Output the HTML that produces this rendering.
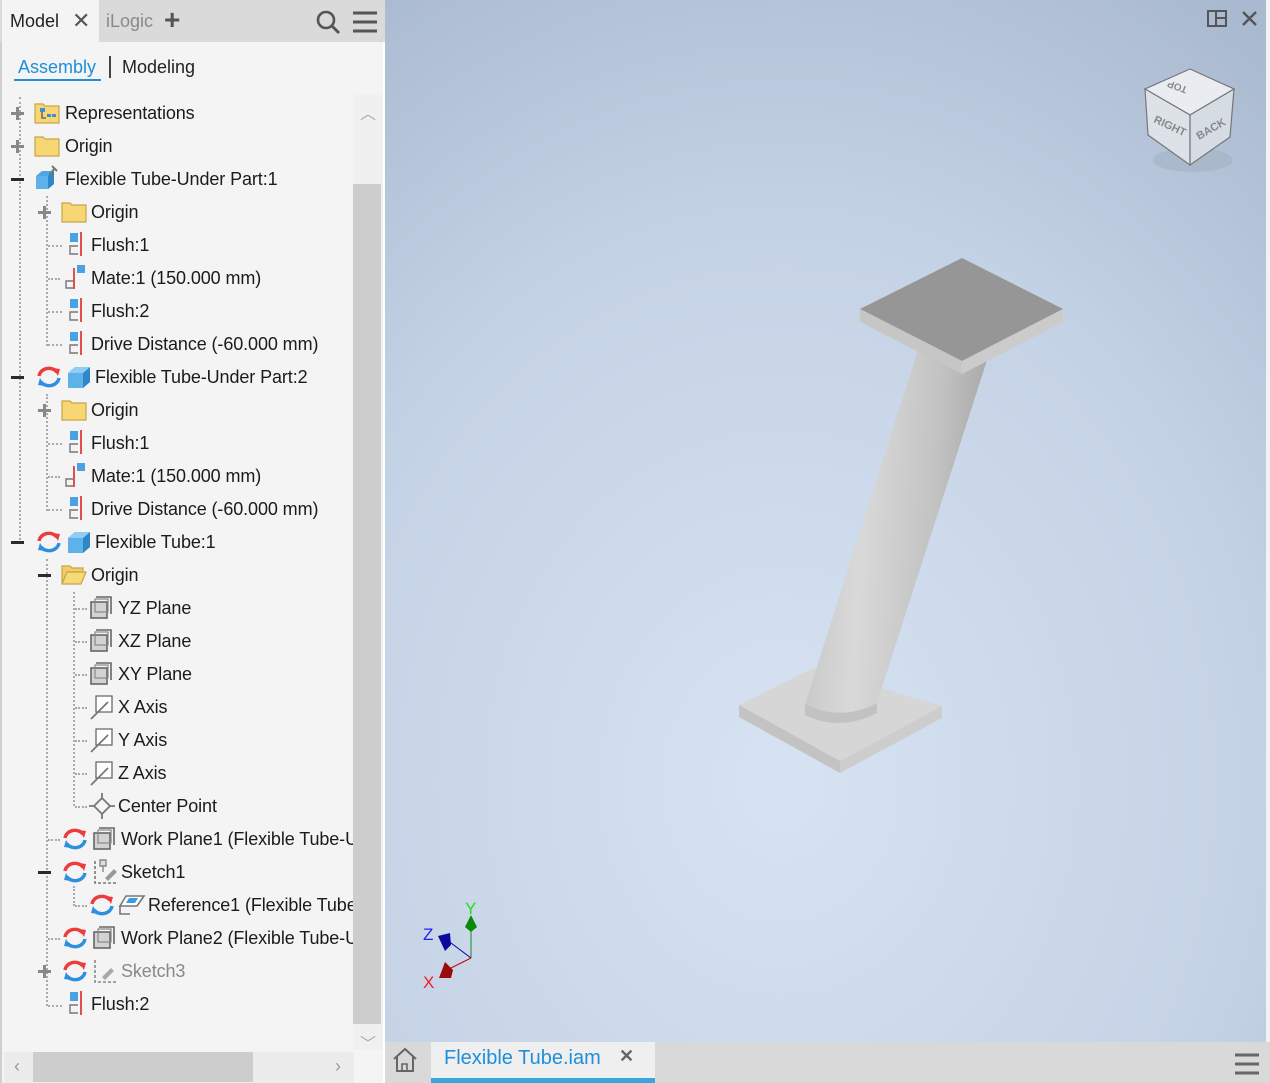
<!DOCTYPE html>
<html><head><meta charset="utf-8"><style>
*{margin:0;padding:0;box-sizing:border-box}
body{width:1270px;height:1083px;overflow:hidden;background:#fff;font-family:"Liberation Sans",sans-serif;position:relative}
.abs{position:absolute}
#left{position:absolute;left:0;top:0;width:383px;height:1083px;background:#f4f4f4;border-left:2px solid #d0d0d0}
.row{position:absolute;height:26px;line-height:26px;font-size:18px;color:#1b1b1b;white-space:nowrap;letter-spacing:-0.1px}
.ic{position:absolute;width:26px;height:26px}
.mn{position:absolute;width:13px;height:3px;background:#2a2a2a;margin-left:-2px;margin-top:12px}
.pl{position:absolute;width:13px;height:13px;margin-left:-2px;margin-top:7px}
.pl:before{content:"";position:absolute;left:0;top:5px;width:13px;height:3px;background:#888}
.pl:after{content:"";position:absolute;left:5px;top:0;width:3px;height:13px;background:#888}
.vd{position:absolute;border-left:2px dotted #aaa;width:0}
.hd{position:absolute;border-top:2px dotted #aaa;height:0}
</style></head><body>
<svg width="0" height="0" style="position:absolute">
<defs>
<symbol id="folder" viewBox="0 0 26 26"><path d="M1 5h8l2 2h14v17H1z" fill="#f7d774" stroke="#c7a546" stroke-width="1.2"/></symbol>
<symbol id="ofolder" viewBox="0 0 26 26"><path d="M1 5h8l2 2h11v4H6L1 23z" fill="#f3cd62" stroke="#c7a546" stroke-width="1.2"/><path d="M6 11h19l-5 12H1z" fill="#f7d978" stroke="#c7a546" stroke-width="1.2"/></symbol>
<symbol id="repr" viewBox="0 0 26 26"><path d="M1 5h8l2 2h14v17H1z" fill="#f7d774" stroke="#c7a546" stroke-width="1.2"/><rect x="6" y="9" width="5" height="4" fill="#3d8fd6"/><path d="M8 13v6h4" stroke="#555" fill="none" stroke-width="1.3"/><rect x="13" y="15" width="4" height="3" fill="#3d8fd6"/><rect x="18" y="15" width="4" height="3" fill="#3d8fd6"/></symbol>
<symbol id="flush" viewBox="0 0 26 26"><rect x="7" y="2" width="8" height="9" fill="#4aa3e0"/><path d="M15 15H7v8h8" stroke="#777" fill="none" stroke-width="1.4"/><path d="M18 1v24" stroke="#e05050" stroke-width="2"/></symbol>
<symbol id="mate" viewBox="0 0 26 26"><rect x="16" y="1" width="8" height="8" fill="#4aa3e0"/><path d="M13 17H5v7h8" stroke="#777" fill="none" stroke-width="1.4"/><path d="M13 4v21" stroke="#e05050" stroke-width="2"/></symbol>
<symbol id="sync" viewBox="0 0 28 26"><path d="M4 12a10 9 0 0 1 18-4" stroke="#ee3b3b" stroke-width="3.4" fill="none"/><path d="M18 4l7 1-2 7z" fill="#ee3b3b"/><path d="M24 14a10 9 0 0 1-18 4" stroke="#2d8fe0" stroke-width="3.4" fill="none"/><path d="M10 22l-7-1 2-7z" fill="#2d8fe0"/></symbol>
<symbol id="cube" viewBox="0 0 26 26"><path d="M2 9l7-6h15v15l-7 6H2z" fill="#4ea6e3"/><path d="M2 9h15v15H2z" fill="#5db2ea"/><path d="M17 9l7-6v15l-7 6z" fill="#2f86c8"/><path d="M2 9l7-6h15l-7 6z" fill="#8fcdf3"/></symbol>
<symbol id="pcube" viewBox="0 0 26 26"><path d="M2 11l6-5h12v13l-6 5H2z" fill="#4ea6e3"/><path d="M2 11h12v13H2z" fill="#5db2ea"/><path d="M14 11l6-5v13l-6 5z" fill="#2f86c8"/><path d="M15 10l6-7m-3-2l5 5" stroke="#777" stroke-width="2"/></symbol>
<symbol id="plane" viewBox="0 0 28 28"><path d="M8 3h15v17" stroke="#666" fill="none" stroke-width="1.6"/><rect x="3" y="8" width="16" height="16" fill="#d2d2d2" stroke="#666" stroke-width="1.6"/><rect x="7" y="5" width="13" height="13" fill="none" stroke="#888" stroke-width="1.2"/></symbol>
<symbol id="axis" viewBox="0 0 28 28"><path d="M8 3h16v16H8z" fill="#fff" stroke="#666" stroke-width="1.3"/><path d="M3 26L20 9" stroke="#777" stroke-width="1.8"/></symbol>
<symbol id="pt" viewBox="0 0 28 28"><path d="M14 6l8 8-8 8-8-8z" fill="none" stroke="#777" stroke-width="1.8"/><path d="M14 1v6M14 21v6M1 14h6M21 14h6" stroke="#777" stroke-width="1.8"/></symbol>
<symbol id="sketch" viewBox="0 0 28 28"><path d="M4 3v22h21" stroke="#777" fill="none" stroke-width="1.6" stroke-dasharray="3 2"/><path d="M9 2h6v6h-6zM12 8v6" stroke="#888" fill="#ddd" stroke-width="1.4"/><path d="M14 20l9-9 3 3-9 9z" fill="#999"/></symbol>
<symbol id="sketch3" viewBox="0 0 28 28"><path d="M4 3v22h21" stroke="#888" fill="none" stroke-width="1.6" stroke-dasharray="3 2"/><path d="M11 20l9-9 3 3-9 9z" fill="#aaa"/></symbol>
<symbol id="ref" viewBox="0 0 28 28"><path d="M8 5h18l-7 10H2z" fill="#fff" stroke="#777" stroke-width="1.6"/><path d="M11 7h9l-3 5H8z" fill="#3d9ae0"/><path d="M2 15v8h10" stroke="#777" fill="none" stroke-width="1.6"/></symbol>
<linearGradient id="tube" x1="0" y1="0" x2="1" y2="0.1"><stop offset="0" stop-color="#c4c4c4"/><stop offset="0.35" stop-color="#d9d9d9"/><stop offset="0.75" stop-color="#c2c2c2"/><stop offset="1" stop-color="#a9a9a9"/></linearGradient>
<radialGradient id="bg" cx="0.45" cy="0.75" r="0.9"><stop offset="0" stop-color="#d7e3f2"/><stop offset="0.6" stop-color="#c4d2e5"/><stop offset="1" stop-color="#a9b9cf"/></radialGradient>
</defs></svg>

<div id="left">
 <div class="abs" style="left:-2px;top:0;width:385px;height:42px;background:#dadada"></div>
 <div class="abs" style="left:0;top:0;width:97px;height:42px;background:#f4f4f4"></div>
 <div class="abs" style="left:8px;top:11px;font-size:18px;color:#222">Model</div>
 <div class="abs" style="left:70px;top:8px;font-size:22px;color:#555">✕</div>
 <div class="abs" style="left:104px;top:11px;font-size:18px;color:#8a8a8a">iLogic</div>
 <div class="abs" style="left:162px;top:4px;font-size:28px;color:#555;font-weight:bold">+</div>
 <svg class="abs" style="left:312px;top:8px" width="28" height="28"><circle cx="12" cy="12" r="8" stroke="#555" stroke-width="2.6" fill="none"/><path d="M18 18l7 7" stroke="#555" stroke-width="3"/></svg>
 <svg class="abs" style="left:350px;top:10px" width="26" height="24"><path d="M1 3h24M1 12h24M1 21h24" stroke="#555" stroke-width="3"/></svg>
 <div class="abs" style="left:16px;top:57px;font-size:18px;color:#1e8fd8">Assembly</div>
 <div class="abs" style="left:12px;top:79px;width:87px;height:2px;background:#1e8fd8"></div>
 <div class="abs" style="left:107px;top:56px;width:2px;height:22px;background:#444"></div>
 <div class="abs" style="left:120px;top:57px;font-size:18px;color:#222">Modeling</div>

 <div class="abs" style="left:351px;top:95px;width:30px;height:955px;background:#f0f0f0"></div>
 <div class="abs" style="left:351px;top:184px;width:28px;height:840px;background:#cdcdcd"></div>
 <div class="abs" style="left:358px;top:100px;font-size:16px;color:#aaa">︿</div>
 <div class="abs" style="left:358px;top:1030px;font-size:16px;color:#aaa">﹀</div>
 <div class="abs" style="left:2px;top:1052px;width:350px;height:31px;background:#ececec"></div>
 <div class="abs" style="left:31px;top:1052px;width:220px;height:30px;background:#cdcdcd"></div>
 <div class="abs" style="left:12px;top:1056px;font-size:18px;color:#999">‹</div>
 <div class="abs" style="left:333px;top:1056px;font-size:18px;color:#999">›</div>

 <div class="vd" style="left:17px;top:97px;height:443px"></div>
 <div class="vd" style="left:44px;top:196px;height:150px"></div>
 <div class="vd" style="left:44px;top:394px;height:117px"></div>
 <div class="vd" style="left:44px;top:559px;height:447px"></div>
 <div class="vd" style="left:71px;top:592px;height:214px"></div>
 <div class="vd" style="left:71px;top:886px;height:20px"></div>
 <div class="hd" style="left:46px;top:245px;width:14px"></div><div class="hd" style="left:46px;top:278px;width:12px"></div><div class="hd" style="left:46px;top:311px;width:14px"></div><div class="hd" style="left:46px;top:344px;width:14px"></div>
 <div class="hd" style="left:46px;top:443px;width:14px"></div><div class="hd" style="left:46px;top:476px;width:12px"></div><div class="hd" style="left:46px;top:509px;width:14px"></div>
 <div class="hd" style="left:73px;top:608px;width:12px"></div><div class="hd" style="left:73px;top:641px;width:12px"></div><div class="hd" style="left:73px;top:674px;width:12px"></div><div class="hd" style="left:73px;top:707px;width:12px"></div><div class="hd" style="left:73px;top:740px;width:12px"></div><div class="hd" style="left:73px;top:773px;width:12px"></div><div class="hd" style="left:73px;top:806px;width:12px"></div>
 <div class="hd" style="left:46px;top:839px;width:12px"></div><div class="hd" style="left:73px;top:905px;width:12px"></div><div class="hd" style="left:46px;top:938px;width:12px"></div><div class="hd" style="left:46px;top:1005px;width:14px"></div>

 <div class="pl" style="left:11px;top:100px"></div><svg class="ic" style="left:32px;top:99px"><use href="#repr"/></svg><div class="row" style="left:63px;top:100px">Representations</div>
 <div class="pl" style="left:11px;top:133px"></div><svg class="ic" style="left:32px;top:132px"><use href="#folder"/></svg><div class="row" style="left:63px;top:133px">Origin</div>
 <div class="mn" style="left:11px;top:166px"></div><svg class="ic" style="left:32px;top:165px"><use href="#pcube"/></svg><div class="row" style="left:63px;top:166px">Flexible Tube-Under Part:1</div>
 <div class="pl" style="left:38px;top:199px"></div><svg class="ic" style="left:59px;top:198px"><use href="#folder"/></svg><div class="row" style="left:89px;top:199px">Origin</div>
 <svg class="ic" style="left:61px;top:231px"><use href="#flush"/></svg><div class="row" style="left:89px;top:232px">Flush:1</div>
 <svg class="ic" style="left:59px;top:264px"><use href="#mate"/></svg><div class="row" style="left:89px;top:265px">Mate:1 (150.000 mm)</div>
 <svg class="ic" style="left:61px;top:297px"><use href="#flush"/></svg><div class="row" style="left:89px;top:298px">Flush:2</div>
 <svg class="ic" style="left:61px;top:330px"><use href="#flush"/></svg><div class="row" style="left:89px;top:331px">Drive Distance (-60.000 mm)</div>
 <div class="mn" style="left:11px;top:364px"></div><svg class="ic" style="left:33px;top:364px;width:28px"><use href="#sync"/></svg><svg class="ic" style="left:64px;top:364px"><use href="#cube"/></svg><div class="row" style="left:93px;top:364px">Flexible Tube-Under Part:2</div>
 <div class="pl" style="left:38px;top:397px"></div><svg class="ic" style="left:59px;top:396px"><use href="#folder"/></svg><div class="row" style="left:89px;top:397px">Origin</div>
 <svg class="ic" style="left:61px;top:429px"><use href="#flush"/></svg><div class="row" style="left:89px;top:430px">Flush:1</div>
 <svg class="ic" style="left:59px;top:462px"><use href="#mate"/></svg><div class="row" style="left:89px;top:463px">Mate:1 (150.000 mm)</div>
 <svg class="ic" style="left:61px;top:495px"><use href="#flush"/></svg><div class="row" style="left:89px;top:496px">Drive Distance (-60.000 mm)</div>
 <div class="mn" style="left:11px;top:529px"></div><svg class="ic" style="left:33px;top:529px;width:28px"><use href="#sync"/></svg><svg class="ic" style="left:64px;top:529px"><use href="#cube"/></svg><div class="row" style="left:93px;top:529px">Flexible Tube:1</div>
 <div class="mn" style="left:38px;top:562px"></div><svg class="ic" style="left:59px;top:561px"><use href="#ofolder"/></svg><div class="row" style="left:89px;top:562px">Origin</div>
 <svg class="ic" style="left:86px;top:594px;width:28px;height:28px"><use href="#plane"/></svg><div class="row" style="left:116px;top:595px">YZ Plane</div>
 <svg class="ic" style="left:86px;top:627px;width:28px;height:28px"><use href="#plane"/></svg><div class="row" style="left:116px;top:628px">XZ Plane</div>
 <svg class="ic" style="left:86px;top:660px;width:28px;height:28px"><use href="#plane"/></svg><div class="row" style="left:116px;top:661px">XY Plane</div>
 <svg class="ic" style="left:86px;top:693px;width:28px;height:28px"><use href="#axis"/></svg><div class="row" style="left:116px;top:694px">X Axis</div>
 <svg class="ic" style="left:86px;top:726px;width:28px;height:28px"><use href="#axis"/></svg><div class="row" style="left:116px;top:727px">Y Axis</div>
 <svg class="ic" style="left:86px;top:759px;width:28px;height:28px"><use href="#axis"/></svg><div class="row" style="left:116px;top:760px">Z Axis</div>
 <svg class="ic" style="left:86px;top:792px;width:28px;height:28px"><use href="#pt"/></svg><div class="row" style="left:116px;top:793px">Center Point</div>
 <div class="abs" style="left:59px;top:822px;width:292px;height:210px;overflow:hidden">
  <svg class="ic" style="left:0;top:4px;width:28px"><use href="#sync"/></svg><svg class="ic" style="left:30px;top:3px;width:28px;height:28px"><use href="#plane"/></svg><div class="row" style="left:60px;top:4px">Work Plane1 (Flexible Tube-Under Part:1)</div>
  <svg class="ic" style="left:0;top:37px;width:28px"><use href="#sync"/></svg><svg class="ic" style="left:30px;top:36px;width:28px;height:28px"><use href="#sketch"/></svg><div class="row" style="left:60px;top:37px">Sketch1</div>
  <svg class="ic" style="left:27px;top:70px;width:28px"><use href="#sync"/></svg><svg class="ic" style="left:57px;top:69px;width:28px;height:28px"><use href="#ref"/></svg><div class="row" style="left:87px;top:70px">Reference1 (Flexible Tube-Under Part:1)</div>
  <svg class="ic" style="left:0;top:103px;width:28px"><use href="#sync"/></svg><svg class="ic" style="left:30px;top:102px;width:28px;height:28px"><use href="#plane"/></svg><div class="row" style="left:60px;top:103px">Work Plane2 (Flexible Tube-Under Part:2)</div>
  <svg class="ic" style="left:0;top:136px;width:28px"><use href="#sync"/></svg><svg class="ic" style="left:30px;top:135px;width:28px;height:28px"><use href="#sketch3"/></svg><div class="row" style="left:60px;top:136px;color:#888">Sketch3</div>
  <svg class="ic" style="left:2px;top:168px"><use href="#flush"/></svg><div class="row" style="left:30px;top:169px">Flush:2</div>
 </div>
 <div class="mn" style="left:38px;top:859px"></div>
 <div class="pl" style="left:38px;top:958px"></div>
</div>

<svg class="abs" style="left:385px;top:0" width="881" height="1042">
 <rect width="881" height="1042" fill="url(#bg)"/>
 <path d="M354 705L428 668L557 706L455 761z" fill="#d6d6d6"/>
 <path d="M354 705L455 761L455 773L354 717z" fill="#c3c3c3"/>
 <path d="M455 761L557 706L557 718L455 773z" fill="#cdcdcd"/>
 <path d="M420 704L420 715Q455 732 492 713L492 702z" fill="#c2c2c2"/>
 <path d="M533 350L603 357L492 703Q456 722 420 704z" fill="url(#tube)"/>
 <path d="M475 309L577 258L678 309L577 361z" fill="#969696"/>
 <path d="M475 309L577 361L577 374L475 322z" fill="#c6c6c6"/>
 <path d="M577 361L678 309L678 322L577 374z" fill="#cbcbcb"/>
 <ellipse cx="808" cy="160" rx="40" ry="12" fill="#9fadc0" opacity="0.5"/>
 <path d="M805 69L849 89L805 115L760 89z" fill="#e9edf2" stroke="#777" stroke-width="1.2"/>
 <path d="M760 89L805 115L805 165L763 135z" fill="#dde2e9" stroke="#777" stroke-width="1.2"/>
 <path d="M805 115L849 89L845 137L805 165z" fill="#d6dce4" stroke="#777" stroke-width="1.2"/>
 <text x="802" y="93" font-size="10" fill="#888" font-family="Liberation Sans" font-weight="bold" transform="rotate(200 802 90)">TOP</text>
 <text x="768" y="122" font-size="11" fill="#888" font-family="Liberation Sans" font-weight="bold" transform="rotate(25 768 122)">RIGHT</text>
 <text x="814" y="140" font-size="11" fill="#888" font-family="Liberation Sans" font-weight="bold" transform="rotate(-30 814 140)">BACK</text>
 <rect x="823" y="11" width="18" height="15" fill="none" stroke="#555" stroke-width="2"/><path d="M831 11v15M831 18h10" stroke="#555" stroke-width="2"/>
 <path d="M858 12l13 13M871 12l-13 13" stroke="#555" stroke-width="2.4"/>
 <path d="M86 958V925" stroke="#1a8a1a" stroke-width="1"/>
 <path d="M86 958l-24-18" stroke="#0000a0" stroke-width="1"/><path d="M86 958l-26 13" stroke="#c00" stroke-width="1"/>
 <path d="M86 915l6 12-6 5-6-5z" fill="#0a8a0a"/>
 <path d="M53 936l12-3 1 12-6 6z" fill="#0a0a9a"/>
 <path d="M54 978l6-16 8 8-2 8z" fill="#9a0a0a"/>
 <text x="80" y="914" font-size="17" fill="#22dd22" font-family="Liberation Sans">Y</text>
 <text x="38" y="940" font-size="17" fill="#2222ee" font-family="Liberation Sans">Z</text>
 <text x="38" y="988" font-size="17" fill="#ee2222" font-family="Liberation Sans">X</text>
</svg>
<div class="abs" style="left:1266px;top:0;width:4px;height:1083px;background:#f2f2f2"></div>

<div class="abs" style="left:385px;top:1042px;width:885px;height:41px;background:#d9d9d9"></div>
<svg class="abs" style="left:391px;top:1046px" width="28" height="28"><path d="M3 13L14 3l11 10M6 11v14h16V11" stroke="#666" stroke-width="2" fill="none"/><path d="M11 25v-7h5v7" stroke="#666" stroke-width="1.6" fill="none"/></svg>
<div class="abs" style="left:431px;top:1042px;width:224px;height:37px;background:#efefef"></div>
<div class="abs" style="left:431px;top:1078px;width:224px;height:5px;background:#3aa6dc"></div>
<div class="abs" style="left:444px;top:1047px;font-size:20px;color:#1e8fd8">Flexible Tube.iam</div>
<div class="abs" style="left:619px;top:1046px;font-size:18px;color:#666;font-weight:bold">✕</div>
<svg class="abs" style="left:1234px;top:1052px" width="26" height="24"><path d="M1 3h24M1 12h24M1 21h24" stroke="#666" stroke-width="3"/></svg>
</body></html>
